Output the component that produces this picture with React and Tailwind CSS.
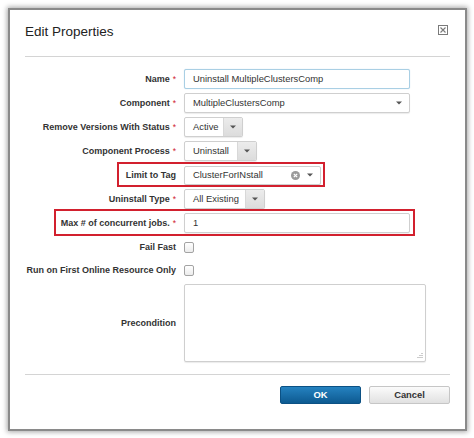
import React from "react";

const LABEL_W = "w-[151px]";

function Req() {
  return <span className="ml-[3px] text-[#d0202f] font-normal text-[8.5px]">*</span>;
}

function Label({ children, required }) {
  return (
    <div className={`${LABEL_W} shrink-0 whitespace-nowrap text-right text-[9px] font-bold text-[#333] leading-none`}>
      {children}
      {required && <Req />}
    </div>
  );
}

function Caret() {
  return (
    <svg width="6" height="4" viewBox="0 0 6 4" className="shrink-0">
      <path d="M0 0.5 L6 0.5 L3 3.5 Z" fill="#555" />
    </svg>
  );
}

function TextInput({ value, focused, className = "w-[226px]" }) {
  return (
    <div
      className={`${className} h-[20px] flex items-center px-[8px] bg-white rounded-[2px] border text-[9.4px] text-[#333] ${
        focused ? "border-[#a9cfe4] shadow-[0_0_1px_rgba(80,150,200,0.4)]" : "border-[#cfcfcf] shadow-[0_1px_1px_rgba(0,0,0,0.06)]"
      }`}
    >
      {value}
    </div>
  );
}

// small select with grey arrow segment
function ButtonSelect({ value, width }) {
  return (
    <div className={`${width} h-[20px] flex bg-white rounded-[2px] border border-[#cfcfcf] shadow-[0_1px_1px_rgba(0,0,0,0.08)] overflow-hidden`}>
      <div className="flex-1 flex items-center pl-[8px] text-[9.4px] text-[#333]">{value}</div>
      <div className="w-[19px] flex items-center justify-center bg-gradient-to-b from-[#ececec] to-[#dcdcdc] border-l border-[#d8d8d8]">
        <Caret />
      </div>
    </div>
  );
}

function Checkbox() {
  return (
    <div className="w-[10px] h-[11px] rounded-[2px] border border-[#a3a3a3] bg-gradient-to-b from-white to-[#ececec]" />
  );
}

function Row({ label, required, children, className = "" }) {
  return (
    <div className={`flex items-center gap-2 h-[20px] ${className}`}>
      <Label required={required}>{label}</Label>
      {children}
    </div>
  );
}

export default function App() {
  return (
    <div className="w-[474px] h-[438px] bg-white p-2 font-['Liberation_Sans',Arial,sans-serif]">
      <div className="w-[459px] h-[423px] border-2 border-[#8a8a8a] bg-white shadow-[0_0_5px_1px_rgba(0,0,0,0.35)] px-[15px] flex flex-col">
        {/* header */}
        <div className="h-[47px] shrink-0 flex justify-between border-b border-[#d4d4d4]">
          <div className="pt-[15px] text-[13.5px] text-[#222] leading-none">Edit Properties</div>
          <svg width="10" height="10" viewBox="0 0 10 10" className="mt-[15px] mr-[2px]">
            <rect x="0.5" y="0.5" width="9" height="9" fill="none" stroke="#7a7a7a" />
            <path d="M2.5 2.5 L7.5 7.5 M7.5 2.5 L2.5 7.5" stroke="#7a7a7a" strokeWidth="1.1" />
          </svg>
        </div>

        {/* form */}
        <div className="flex flex-col mt-[12px]">
          <Row label="Name" required>
            <TextInput value="Uninstall MultipleClustersComp" focused />
          </Row>

          <Row label="Component" required className="mt-[4px]">
            <div className="w-[226px] h-[20px] flex items-center justify-between px-[8px] pr-[7px] bg-white rounded-[2px] border border-[#cfcfcf] shadow-[0_1px_1px_rgba(0,0,0,0.08)] text-[9.4px] text-[#333]">
              MultipleClustersComp
              <Caret />
            </div>
          </Row>

          <Row label="Remove Versions With Status" required className="mt-[4px]">
            <ButtonSelect value="Active" width="w-[59px]" />
          </Row>

          <Row label="Component Process" required className="mt-[4px]">
            <ButtonSelect value="Uninstall" width="w-[73px]" />
          </Row>

          <Row label="Limit to Tag" className="mt-[4px] relative">
            <div className="w-[137px] h-[19px] flex items-center px-[8px] pr-[7px] bg-white rounded-[2px] border border-[#cfcfcf] shadow-[0_1px_1px_rgba(0,0,0,0.08)] text-[9.4px] text-[#333]">
              <span className="flex-1">ClusterForINstall</span>
              <svg width="9" height="9" viewBox="0 0 9 9" className="mr-[7px]">
                <circle cx="4.5" cy="4.5" r="4.5" fill="#9a9a9a" />
                <path d="M2.8 2.8 L6.2 6.2 M6.2 2.8 L2.8 6.2" stroke="#fff" strokeWidth="1.2" />
              </svg>
              <Caret />
            </div>
            <div className="absolute left-[92px] top-[-3px] w-[208px] h-[25px] border-2 border-[#d2202e] pointer-events-none" />
          </Row>

          <Row label="Uninstall Type" required className="mt-[4px]">
            <ButtonSelect value="All Existing" width="w-[81px]" />
          </Row>

          <Row label="Max # of concurrent jobs." required className="mt-[4px] relative">
            <TextInput value="1" />
            <div className="absolute left-[29px] top-[-4px] w-[361px] h-[27px] border-2 border-[#d2202e] pointer-events-none" />
          </Row>

          <Row label="Fail Fast" className="mt-[4px]">
            <Checkbox />
          </Row>

          <Row label="Run on First Online Resource Only" className="mt-[3px]">
            <Checkbox />
          </Row>

          <div className="flex items-center gap-2 mt-[4px]">
            <Label>Precondition</Label>
            <div className="relative w-[242px] h-[78px] bg-white rounded-[2px] border border-[#cfcfcf] shadow-[0_1px_1px_rgba(0,0,0,0.08)]">
              <svg width="6" height="6" viewBox="0 0 6 6" className="absolute right-[2px] bottom-[2px]">
                <rect x="4.5" y="0" width="1" height="1" fill="#999" />
                <rect x="2.5" y="2" width="1" height="1" fill="#999" />
                <rect x="4.5" y="2" width="1" height="1" fill="#999" />
                <rect x="0.5" y="4" width="1" height="1" fill="#999" />
                <rect x="2.5" y="4" width="1" height="1" fill="#999" />
                <rect x="4.5" y="4" width="1" height="1" fill="#999" />
              </svg>
            </div>
          </div>
        </div>

        {/* footer */}
        <div className="mt-[12px] border-t border-[#d4d4d4] pt-[11px] flex justify-end gap-2">
          <button className="w-[81px] h-[18px] rounded-[2px] border border-[#0c5184] bg-gradient-to-b from-[#2582c0] to-[#0d5a91] text-white text-[9.4px] font-bold leading-none">
            OK
          </button>
          <button className="w-[81px] h-[18px] rounded-[2px] border border-[#c6c6c6] bg-gradient-to-b from-[#fbfbfb] to-[#e1e1e1] text-[#333] text-[9.4px] font-bold leading-none">
            Cancel
          </button>
        </div>
      </div>
    </div>
  );
}
